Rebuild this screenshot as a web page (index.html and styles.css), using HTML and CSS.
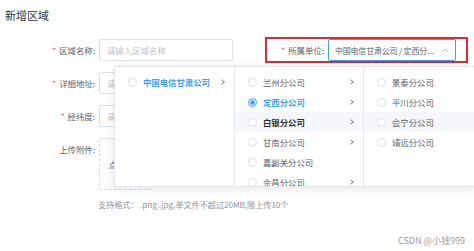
FILE: index.html
```html
<!DOCTYPE html>
<html lang="zh-CN">
<head>
    <meta charset="UTF-8">
    <title>新增区域</title>
    <link rel="stylesheet" href="styles.css">
</head>
<body>
    <div class="page">
        <h1 class="title">新增区域</h1>
        <form class="form">
            <div class="row">
                <div class="form-item">
                    <label class="label required">区域名称:</label>
                    <div class="input w-name"><span class="placeholder">请输入区域名称</span></div>
                </div>
                <div class="form-item marked">
                    <label class="label label-unit required">所属单位:</label>
                    <div class="input select is-focus">
                        <span class="value">中国电信甘肃公司 / 定西分...</span>
                        <svg class="arrow" width="8" height="5" viewBox="0 0 8 5"><polyline points="0.5,4.5 4,1 7.5,4.5" fill="none" stroke="#c0c4cc" stroke-width="1"/></svg>
                    </div>
                </div>
            </div>
            <div class="row">
                <div class="form-item">
                    <label class="label required">详细地址:</label>
                    <div class="input w-wide"><span class="placeholder">请输入</span></div>
                </div>
            </div>
            <div class="row">
                <div class="form-item">
                    <label class="label required">经纬度:</label>
                    <div class="input w-wide"><span class="placeholder">请输入</span></div>
                </div>
            </div>
            <div class="row upload-row">
                <div class="form-item top">
                    <label class="label">上传附件:</label>
                    <div class="upload-box"><span>点击</span></div>
                </div>
            </div>
            <p class="hint">支持格式： .png .jpg,单文件不超过20MB,限上传10个</p>
        </form>

        <div class="cascader">
            <ul class="menu menu-1">
                <li class="node in-path"><i class="radio"></i><span>中国电信甘肃公司</span><b class="chev"></b></li>
            </ul>
            <ul class="menu menu-2">
                <li class="node"><i class="radio"></i><span>兰州分公司</span><b class="chev"></b></li>
                <li class="node in-path"><i class="radio checked"></i><span>定西分公司</span><b class="chev"></b></li>
                <li class="node hover"><i class="radio"></i><span>白银分公司</span><b class="chev"></b></li>
                <li class="node"><i class="radio"></i><span>甘南分公司</span><b class="chev"></b></li>
                <li class="node"><i class="radio"></i><span>嘉峪关分公司</span></li>
                <li class="node"><i class="radio"></i><span>金昌分公司</span><b class="chev"></b></li>
            </ul>
            <ul class="menu menu-3">
                <li class="node"><i class="radio"></i><span>景泰分公司</span></li>
                <li class="node"><i class="radio"></i><span>平川分公司</span></li>
                <li class="node shade"><i class="radio"></i><span>会宁分公司</span></li>
                <li class="node"><i class="radio"></i><span>靖远分公司</span></li>
            </ul>
        </div>

        <div class="watermark">CSDN @小钱999</div>
    </div>
</body>
</html>
```

FILE: styles.css
```css
* {
    margin: 0;
    padding: 0;
    box-sizing: border-box;
}

body {
    background: #fff;
    font-family: "Noto Sans CJK SC", "Noto Sans", sans-serif;
    color: #606266;
    width: 474px;
    height: 251px;
    overflow: hidden;
}

.page {
    position: relative;
    height: 251px;
    padding-top: 7px;
}

.title {
    font-size: 11px;
    font-weight: 400;
    line-height: 16px;
    color: #303133;
    padding-left: 5px;
}

.form {
    margin-top: 16px;
}

.row {
    display: flex;
    align-items: center;
    margin-bottom: 11px;
}

.form-item {
    display: flex;
    align-items: center;
    height: 22px;
}

.form-item.top {
    align-items: flex-start;
    height: auto;
}

.label {
    width: 99px;
    padding-right: 4px;
    text-align: right;
    font-size: 8.4px;
    line-height: 22px;
    color: #606266;
    flex: none;
}

.required::before {
    content: "*";
    color: #f56c6c;
    margin-right: 3px;
}

.input {
    height: 22px;
    border: 1px solid #dcdfe6;
    border-radius: 2px;
    display: flex;
    align-items: center;
    padding: 0 7px;
    font-size: 8.4px;
    background: #fff;
    white-space: nowrap;
    overflow: hidden;
}

.w-name {
    width: 134px;
}

.w-wide {
    width: 134px;
}

.placeholder {
    color: #c0c4cc;
}

.marked {
    margin-left: 34px;
    outline: 2px solid #e8262b;
    width: 199px;
}

.label-unit {
    width: 61px;
}

.select {
    width: 128px;
    justify-content: space-between;
    color: #606266;
    padding: 0 6px;
}

.select.is-focus {
    border-color: #409eff;
}

.value {
    font-size: 7.9px;
    letter-spacing: -0.1px;
}

.arrow {
    flex: none;
    margin-left: 2px;
}

.upload-row {
    margin-top: 3px;
    margin-bottom: 0;
}

.upload-box {
    width: 53px;
    height: 52px;
    border: 1px dashed #d9d9d9;
    border-radius: 3px;
    background: #fbfdff;
    display: flex;
    align-items: center;
    padding-left: 9px;
    font-size: 8px;
    color: #606266;
}

.hint {
    margin-top: 9px;
    padding-left: 98px;
    font-size: 8.1px;
    line-height: 12px;
    color: #909399;
    white-space: nowrap;
}

/* cascader popover */
.cascader {
    position: absolute;
    left: 114px;
    top: 66px;
    width: 362px;
    height: 121px;
    display: flex;
    background: #fff;
    border: 1px solid #e4e7ed;
    border-radius: 2px;
    box-shadow: 0 2px 10px rgba(0, 0, 0, 0.1);
    overflow: hidden;
}

.menu {
    list-style: none;
    padding-top: 5px;
    border-right: 1px solid #e4e7ed;
    flex: none;
}

.menu-1 {
    width: 120px;
}

.menu-2 {
    width: 129px;
}

.menu-3 {
    flex: 1;
    border-right: none;
}

.node {
    position: relative;
    display: flex;
    align-items: center;
    height: 20px;
    padding-left: 13px;
    font-size: 8.4px;
    color: #606266;
}

.node.hover,
.node.shade {
    background: #f5f7fa;
}

.node.hover span {
    font-weight: 700;
    color: #303133;
}

.node.in-path span {
    color: #409eff;
    font-weight: 700;
}

.radio {
    width: 9px;
    height: 9px;
    border: 1px solid #dcdfe6;
    border-radius: 50%;
    margin-right: 6px;
    flex: none;
    background: #fff;
}

.radio.checked {
    border-color: #409eff;
    background: radial-gradient(circle, #409eff 0 2px, #fff 2.5px);
}

.chev {
    position: absolute;
    right: 10px;
    top: 8px;
    width: 4px;
    height: 4px;
    border-top: 1px solid #909399;
    border-right: 1px solid #909399;
    transform: rotate(45deg);
}

.watermark {
    position: absolute;
    right: 9px;
    bottom: 4px;
    font-size: 9px;
    line-height: 12px;
    color: #a0a0a0;
}
```
